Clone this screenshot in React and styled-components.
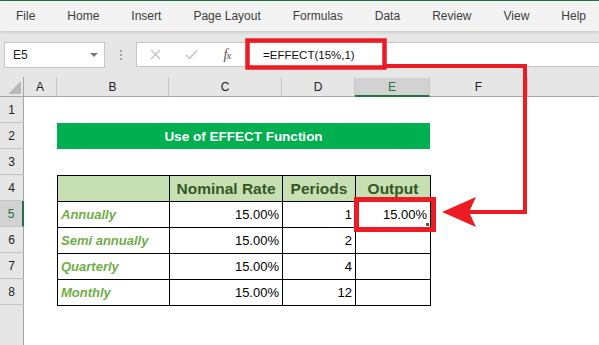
import React from 'react';
import styled, { createGlobalStyle } from 'styled-components';

const GlobalStyle = createGlobalStyle`
  html, body { margin: 0; padding: 0; background: #fff; }
  body { font-family: "Liberation Sans", Arial, sans-serif; overflow: hidden; }
  * { box-sizing: border-box; }
`;

const Window = styled.div`
  position: relative;
  width: 599px;
  height: 345px;
  overflow: hidden;
  background: #fff;
`;

const TopLine = styled.div`
  height: 1px;
  background: #217346;
`;

const MenuBar = styled.nav`
  position: relative;
  z-index: 1;
  height: 30px;
  display: flex;
  align-items: center;
  gap: 32px;
  padding-left: 16px;
  background: #f3f3f3;
  box-shadow: 0 1px 3px rgba(0, 0, 0, 0.16);
`;

const MenuItem = styled.span`
  font-size: 12px;
  color: #3c3c3c;
  white-space: nowrap;
`;

const FormulaBar = styled.div`
  height: 46px;
  display: flex;
  align-items: flex-start;
  padding: 11px 0 0 4px;
  background: #e6e6e6;
`;

const NameBox = styled.div`
  width: 101px;
  height: 26px;
  display: flex;
  align-items: center;
  justify-content: space-between;
  padding: 0 6px 0 8px;
  background: #fff;
  border: 1px solid #c6c6c6;
  font-size: 12px;
  color: #222;
`;

const Caret = styled.span`
  width: 0;
  height: 0;
  border-left: 4px solid transparent;
  border-right: 4px solid transparent;
  border-top: 4px solid #7a7a7a;
`;

const Grip = styled.div`
  width: 31px;
  height: 26px;
  display: flex;
  flex-direction: column;
  align-items: center;
  justify-content: center;
  gap: 2px;
`;

const Dot = styled.span`
  width: 2px;
  height: 2px;
  background: #a0a0a0;
`;

const FormulaBox = styled.div`
  flex: 1;
  height: 25px;
  display: flex;
  align-items: center;
  background: #fff;
  border: 1px solid #c6c6c6;
  border-right: none;
`;

const IconSlot = styled.span`
  width: 36px;
  display: flex;
  align-items: center;
  justify-content: center;
  color: ${p => (p.$dim ? '#c2c2c2' : '#555')};
`;

const Fx = styled.span`
  font-family: "Liberation Serif", "Times New Roman", serif;
  font-style: italic;
  font-size: 14px;
  color: #555;
  letter-spacing: -1px;
  & small { font-size: 11px; }
`;

const FormulaText = styled.span`
  padding-left: 18px;
  font-size: 11.5px;
  color: #111;
`;

const Sheet = styled.div`
  height: 268px;
  display: grid;
  grid-template-columns: 24px 33px 112px 113px 73px 75px 98px 1fr;
  grid-template-rows: 20px repeat(8, 26px) 1fr;
  background: #fff;
`;

const Corner = styled.div`
  position: relative;
  background: #e6e6e6;
  border-right: 1px solid #a6a6a6;
  border-bottom: 1px solid #a6a6a6;
  &::after {
    content: "";
    position: absolute;
    right: 2px;
    bottom: 2px;
    border-left: 13px solid transparent;
    border-bottom: 13px solid #b8b8b8;
  }
`;

const ColHead = styled.div`
  display: flex;
  align-items: center;
  justify-content: center;
  font-size: 12px;
  color: ${p => (p.$active ? '#217346' : '#222')};
  background: ${p => (p.$active ? '#d2d2d2' : '#e6e6e6')};
  border-top: 1px solid #e6e6e6;
  border-right: 1px solid ${p => (p.$last ? '#e6e6e6' : '#c4c4c4')};
  border-bottom: ${p => (p.$active ? '2px solid #217346' : '1px solid #a6a6a6')};
`;

const RowHead = styled.div`
  grid-column: 1;
  display: flex;
  align-items: center;
  justify-content: center;
  font-size: 12px;
  color: ${p => (p.$active ? '#217346' : '#222')};
  background: ${p => (p.$active ? '#d2d2d2' : '#e6e6e6')};
  border-bottom: ${p => (p.$filler ? 'none' : '1px solid #c4c4c4')};
  border-right: ${p => (p.$active ? '2px solid #217346' : '1px solid #a6a6a6')};
`;

const TitleBar = styled.div`
  grid-column: 3 / 7;
  grid-row: 3;
  display: flex;
  align-items: center;
  justify-content: center;
  background: #00b050;
  color: #fff;
  font-weight: bold;
  font-size: 13.5px;
`;

const Table = styled.div`
  grid-column: 3 / 7;
  grid-row: 5 / span 5;
  align-self: start;
  width: 374px;
  height: 131px;
  display: grid;
  grid-template-columns: 111px 112px 72px 74px;
  grid-template-rows: repeat(5, 25px);
  gap: 1px;
  background: #000;
  border: 1px solid #000;
`;

const Cell = styled.div`
  position: relative;
  display: flex;
  align-items: center;
  justify-content: ${p => (p.$head ? 'center' : p.$label ? 'flex-start' : 'flex-end')};
  padding: 0 3px;
  background: ${p => (p.$head ? '#c6e0b4' : '#fff')};
  color: ${p => (p.$head ? '#375623' : p.$label ? '#70ad47' : '#000')};
  font-size: ${p => (p.$head ? '15.5px' : '13px')};
  font-weight: ${p => (p.$head || p.$label ? 'bold' : 'normal')};
  font-style: ${p => (p.$label ? 'italic' : 'normal')};
  box-shadow: ${p => (p.$selected ? 'inset 1px 0 0 #217346' : 'none')};
`;

const FillHandle = styled.span`
  position: absolute;
  right: 1px;
  bottom: 1px;
  width: 3px;
  height: 3px;
  background: #217346;
`;

const Overlay = styled.svg`
  position: absolute;
  top: 0;
  left: 0;
  pointer-events: none;
`;

const menu = ['File', 'Home', 'Insert', 'Page Layout', 'Formulas', 'Data', 'Review', 'View', 'Help'];
const cols = ['A', 'B', 'C', 'D', 'E', 'F', ''];

const rows = [
  ['Annually', '15.00%', '1', '15.00%'],
  ['Semi annually', '15.00%', '2', ''],
  ['Quarterly', '15.00%', '4', ''],
  ['Monthly', '15.00%', '12', ''],
];

export default function App() {
  return (
    <Window>
      <GlobalStyle />
      <TopLine />
      <MenuBar>
        {menu.map(m => <MenuItem key={m}>{m}</MenuItem>)}
      </MenuBar>

      <FormulaBar>
        <NameBox>
          <span>E5</span>
          <Caret />
        </NameBox>
        <Grip>
          <Dot /><Dot /><Dot />
        </Grip>
        <FormulaBox>
          <IconSlot $dim>
            <svg width="11" height="11" viewBox="0 0 11 11">
              <path d="M1 1 L10 10 M10 1 L1 10" stroke="currentColor" strokeWidth="1.3" fill="none" />
            </svg>
          </IconSlot>
          <IconSlot $dim>
            <svg width="13" height="11" viewBox="0 0 13 11">
              <path d="M1 6 L4.5 9.5 L12 1.5" stroke="currentColor" strokeWidth="1.5" fill="none" />
            </svg>
          </IconSlot>
          <IconSlot>
            <Fx>f<small>x</small></Fx>
          </IconSlot>
          <FormulaText>=EFFECT(15%,1)</FormulaText>
        </FormulaBox>
      </FormulaBar>

      <Sheet>
        <Corner />
        {cols.map((c, i) => (
          <ColHead key={i} $active={c === 'E'} $last={i === cols.length - 1}>{c}</ColHead>
        ))}
        {[1, 2, 3, 4, 5, 6, 7, 8].map(n => (
          <RowHead key={n} style={{ gridRow: n + 1 }} $active={n === 5}>{n}</RowHead>
        ))}
        <RowHead style={{ gridRow: 10 }} $filler />

        <TitleBar>Use of EFFECT Function</TitleBar>

        <Table>
          <Cell $head />
          <Cell $head>Nominal Rate</Cell>
          <Cell $head>Periods</Cell>
          <Cell $head>Output</Cell>
          {rows.map((r, i) => (
            <React.Fragment key={r[0]}>
              <Cell $label>{r[0]}</Cell>
              <Cell>{r[1]}</Cell>
              <Cell>{r[2]}</Cell>
              <Cell $selected={i === 0}>
                {r[3]}
                {i === 0 && <FillHandle />}
              </Cell>
            </React.Fragment>
          ))}
        </Table>
      </Sheet>

      <Overlay width="599" height="345" viewBox="0 0 599 345">
        <rect x="247.5" y="40.5" width="137" height="27" fill="none" stroke="#ed1c24" strokeWidth="4.5" />
        <polyline points="384,66 525,66 525,212 468,212" fill="none" stroke="#ed1c24" strokeWidth="4" />
        <polygon points="442,212 476,197 469,212 476,227" fill="#ed1c24" />
        <rect x="356.5" y="199.5" width="77" height="30" fill="none" stroke="#ed1c24" strokeWidth="5" />
      </Overlay>
    </Window>
  );
}
